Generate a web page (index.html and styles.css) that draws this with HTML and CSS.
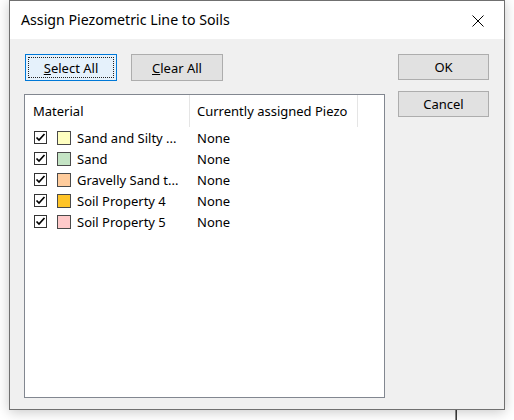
FILE: index.html
```html
<!DOCTYPE html>
<html lang="en">
<head>
    <meta charset="UTF-8">
    <title>Assign Piezometric Line to Soils</title>
    <link rel="stylesheet" href="styles.css">
</head>
<body>

<div class="dialog">
    <div class="titlebar">
        <div class="titlebar-text">Assign Piezometric Line to Soils</div>
        <div class="close-button">
            <svg width="12" height="12" viewBox="0 0 12 12">
                <path d="M0.5 0.5 L11.5 11.5 M11.5 0.5 L0.5 11.5" stroke="#000" stroke-width="1" fill="none"/>
            </svg>
        </div>
    </div>

    <div class="client">
        <div class="left-column">
            <div class="top-buttons">
                <button class="btn btn-default"><span class="focus-rect"><u>S</u>elect All</span></button>
                <button class="btn"><u>C</u>lear All</button>
            </div>

            <div class="list">
                <div class="list-header">
                    <div class="header-cell col-material">Material</div>
                    <div class="header-cell col-piezo">Currently assigned Piezo</div>
                </div>

                <div class="list-row">
                    <div class="cell col-material">
                        <span class="checkbox"><svg width="11" height="11" viewBox="0 0 11 11"><path d="M1.5 5.5 L4 8 L9.5 2" stroke="#000" stroke-width="1.7" fill="none"/></svg></span>
                        <span class="swatch" style="background-color: #ffffc0"></span>
                        <span class="name">Sand and Silty ...</span>
                    </div>
                    <div class="cell col-piezo">None</div>
                </div>

                <div class="list-row">
                    <div class="cell col-material">
                        <span class="checkbox"><svg width="11" height="11" viewBox="0 0 11 11"><path d="M1.5 5.5 L4 8 L9.5 2" stroke="#000" stroke-width="1.7" fill="none"/></svg></span>
                        <span class="swatch" style="background-color: #c4e4c4"></span>
                        <span class="name">Sand</span>
                    </div>
                    <div class="cell col-piezo">None</div>
                </div>

                <div class="list-row">
                    <div class="cell col-material">
                        <span class="checkbox"><svg width="11" height="11" viewBox="0 0 11 11"><path d="M1.5 5.5 L4 8 L9.5 2" stroke="#000" stroke-width="1.7" fill="none"/></svg></span>
                        <span class="swatch" style="background-color: #ffcc9c"></span>
                        <span class="name">Gravelly Sand t...</span>
                    </div>
                    <div class="cell col-piezo">None</div>
                </div>

                <div class="list-row">
                    <div class="cell col-material">
                        <span class="checkbox"><svg width="11" height="11" viewBox="0 0 11 11"><path d="M1.5 5.5 L4 8 L9.5 2" stroke="#000" stroke-width="1.7" fill="none"/></svg></span>
                        <span class="swatch" style="background-color: #ffc427"></span>
                        <span class="name">Soil Property 4</span>
                    </div>
                    <div class="cell col-piezo">None</div>
                </div>

                <div class="list-row">
                    <div class="cell col-material">
                        <span class="checkbox"><svg width="11" height="11" viewBox="0 0 11 11"><path d="M1.5 5.5 L4 8 L9.5 2" stroke="#000" stroke-width="1.7" fill="none"/></svg></span>
                        <span class="swatch" style="background-color: #ffcaca"></span>
                        <span class="name">Soil Property 5</span>
                    </div>
                    <div class="cell col-piezo">None</div>
                </div>
            </div>
        </div>

        <div class="right-column">
            <button class="btn btn-side">OK</button>
            <button class="btn btn-side">Cancel</button>
        </div>
    </div>
</div>

</body>
</html>
```

FILE: styles.css
```css
html, body {
    height: 100%;
    margin: 0;
    padding: 0;
}

body {
    /* edge of the window behind the dialog */
    background:
        linear-gradient(to right, transparent 455px, #8a8a8a 455px, #8a8a8a 456px, #3a3a3a 456px, #3a3a3a 457px, transparent 457px),
        #ffffff;
    font-family: 'Noto Sans', 'Liberation Sans', sans-serif;
    font-size: 13px;
    color: #000;
    overflow: hidden;
}

.dialog {
    margin-left: 9px;
    width: 494px;
    height: 408px;
    border: 1px solid #707070;
    background-color: #f0f0f0;
    box-shadow: 0 2px 12px rgba(0, 0, 0, 0.22);

    display: flex;
    flex-direction: column;
}

.titlebar {
    height: 38px;
    background-color: #ffffff;

    display: flex;
    align-items: center;
    justify-content: space-between;
}

.titlebar-text {
    padding-left: 11px;
    padding-bottom: 1px;
    font-size: 14.2px;
}

.close-button {
    width: 46px;
    height: 38px;
    margin-right: 3px;

    display: flex;
    align-items: center;
    justify-content: center;
}

.close-button svg {
    margin-top: 1px;
}

.client {
    flex: 1;
    display: flex;
    flex-direction: row;
    padding: 15px 15px 12px 14px;
}

.left-column {
    display: flex;
    flex-direction: column;
}

.top-buttons {
    display: flex;
    gap: 14px;
    padding-left: 1px;
}

.btn {
    box-sizing: border-box;
    width: 92px;
    height: 27px;
    margin: 0;
    padding: 0;
    border: 1px solid #adadad;
    background-color: #e1e1e1;
    font-family: inherit;
    font-size: 13px;
    color: #000;

    display: flex;
    align-items: center;
    justify-content: center;
}

.btn-default {
    border-color: #0078d7;
    background-color: #e5f1fb;
    padding: 2px;
}

.focus-rect {
    flex: 1;
    align-self: stretch;
    border: 1px dotted #222;

    display: flex;
    align-items: center;
    justify-content: center;
}

.list {
    box-sizing: border-box;
    width: 361px;
    height: 304px;
    margin-top: 13px;
    border: 1px solid #828790;
    background-color: #ffffff;
}

.list-header {
    display: flex;
    height: 32px;
}

.header-cell {
    box-sizing: border-box;
    display: flex;
    align-items: center;
    padding-bottom: 1px;
    border-right: 1px solid #e5e5e5;
}

.col-material {
    width: 165px;
    padding-left: 8px;
}

.col-piezo {
    width: 168px;
    padding-left: 7px;
}

.list-row {
    display: flex;
    height: 21px;
}

.cell {
    box-sizing: border-box;
    display: flex;
    align-items: center;
}

.list-row .col-material {
    padding-left: 9px;
}

.checkbox {
    box-sizing: border-box;
    flex-shrink: 0;
    width: 13px;
    height: 13px;
    border: 1px solid #333;
    background-color: #fff;
    margin-right: 10px;

    display: flex;
    align-items: center;
    justify-content: center;
}

.swatch {
    box-sizing: border-box;
    flex-shrink: 0;
    width: 14px;
    height: 14px;
    border: 1px solid #4a4a4a;
    margin-right: 6px;
}

.name {
    white-space: nowrap;
    overflow: hidden;
}

.right-column {
    display: flex;
    flex-direction: column;
    gap: 11px;
    margin-left: 13px;
}

.btn-side {
    width: 91px;
    height: 26px;
}
```
